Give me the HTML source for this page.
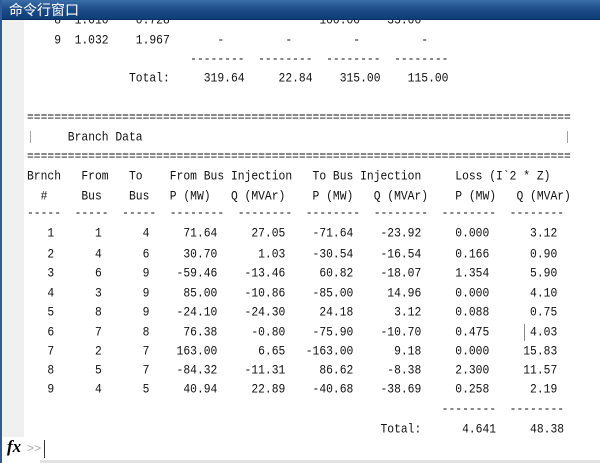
<!DOCTYPE html>
<html><head><meta charset="utf-8"><style>
html,body{margin:0;padding:0}
body{width:600px;height:463px;overflow:hidden;background:#fff;position:relative;font-family:"Liberation Mono",monospace;}
.t{position:absolute;left:27px;white-space:pre;font-size:11.33px;line-height:18px;color:#111;transform:scaleY(1.15);transform-origin:0 50%;}
#title{position:absolute;left:0;top:0;width:600px;height:20px;background:linear-gradient(#3a6ea8,#1c4c88 50%,#0f3d78);color:#fff;font:14px "Noto Sans CJK SC",sans-serif;line-height:20px;padding-left:9px;box-sizing:border-box;z-index:2;border-bottom:1px solid #0a2f60}
#lb{position:absolute;left:0;top:0;width:2px;height:463px;background:#2d5c99;z-index:3}
#gut{position:absolute;left:2px;top:20px;width:22px;height:417px;background:#f0f0f0}
#fx{position:absolute;left:0;top:437px;width:600px;height:26px;background:#fff}
</style></head><body>
<div id="gut"></div>
<div class="t" style="top:12px">    8  1.010    0.728                      100.00    35.00</div>
<div id="title">命令行窗口</div>
<div class="t" style="top:32px">    9  1.032    1.967       -         -         -         -</div>
<div class="t" style="top:51px">                        --------  --------  --------  --------</div>
<div class="t" style="top:70px">               Total:     319.64     22.84    315.00    115.00</div>
<div class="t" style="top:109px">================================================================================</div>
<div class="t" style="top:129px;color:#999">|<span style="color:#111">     Branch Data                                                              </span>|</div>
<div class="t" style="top:148px">================================================================================</div>
<div class="t" style="top:168px">Brnch   From   To    From Bus Injection   To Bus Injection     Loss (I`2 * Z)</div>
<div class="t" style="top:188px">  #     Bus    Bus   P (MW)   Q (MVAr)    P (MW)   Q (MVAr)    P (MW)   Q (MVAr)</div>
<div class="t" style="top:205px">-----  -----  -----  --------  --------  --------  --------  --------  --------</div>
<div class="t" style="top:225px">   1      1      4     71.64     27.05    -71.64    -23.92     0.000      3.12</div>
<div class="t" style="top:246px">   2      4      6     30.70      1.03    -30.54    -16.54     0.166      0.90</div>
<div class="t" style="top:265px">   3      6      9    -59.46    -13.46     60.82    -18.07     1.354      5.90</div>
<div class="t" style="top:285px">   4      3      9     85.00    -10.86    -85.00     14.96     0.000      4.10</div>
<div class="t" style="top:304px">   5      8      9    -24.10    -24.30     24.18      3.12     0.088      0.75</div>
<div class="t" style="top:324px">   6      7      8     76.38     -0.80    -75.90    -10.70     0.475      4.03</div>
<div class="t" style="top:343px">   7      2      7    163.00      6.65   -163.00      9.18     0.000     15.83</div>
<div class="t" style="top:362px">   8      5      7    -84.32    -11.31     86.62     -8.38     2.300     11.57</div>
<div class="t" style="top:381px">   9      4      5     40.94     22.89    -40.68    -38.69     0.258      2.19</div>
<div class="t" style="top:401px">                                                             --------  --------</div>
<div class="t" style="top:421px">                                                    Total:      4.641     48.38</div>
<div style="position:absolute;left:524px;top:324px;width:1px;height:17px;background:#888"></div>
<div id="fx">
<span style="position:absolute;left:7px;top:0;font:italic bold 17px 'Liberation Serif',serif;color:#000">fx</span>
<span style="position:absolute;left:27px;top:4px;font:12px 'Liberation Sans',sans-serif;color:#aaa">&gt;&gt;</span>
<div style="position:absolute;left:44px;top:3px;width:1px;height:18px;background:#333"></div>
<div style="position:absolute;left:40px;top:23px;width:560px;height:3px;background:#e2e2e2"></div>
</div>
<div id="lb"></div>
</body></html>
